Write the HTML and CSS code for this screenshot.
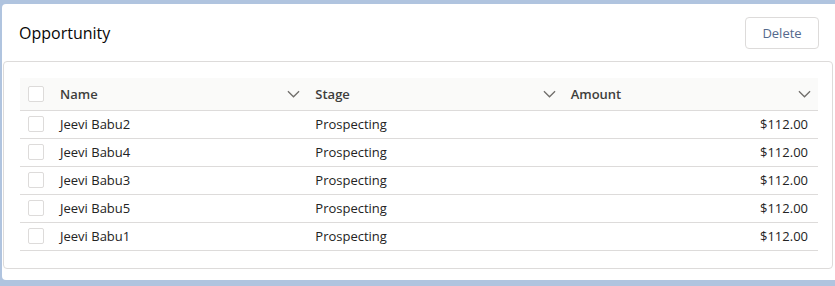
FILE: index.html
```html
<!DOCTYPE html>
<html lang="en">

<head>
    <meta charset="UTF-8">
    <meta name="viewport" content="width=device-width, initial-scale=1.0">
    <title>Opportunity</title>
    <link rel="stylesheet" href="styles.css">
</head>

<body>
    <div class="panel">
        <div class="panel-head">
            <h2 class="title">Opportunity</h2>
            <button class="btn">Delete</button>
        </div>
        <div class="card">
            <table class="grid">
                <thead>
                    <tr>
                        <th class="col-check"><span class="box"></span></th>
                        <th class="col">
                            <div class="th-inner"><span>Name</span><svg class="chev" viewBox="0 0 14 8"><path d="M1 1l6 6 6-6" /></svg></div>
                        </th>
                        <th class="col">
                            <div class="th-inner"><span>Stage</span><svg class="chev" viewBox="0 0 14 8"><path d="M1 1l6 6 6-6" /></svg></div>
                        </th>
                        <th class="col">
                            <div class="th-inner"><span>Amount</span><svg class="chev" viewBox="0 0 14 8"><path d="M1 1l6 6 6-6" /></svg></div>
                        </th>
                    </tr>
                </thead>
                <tbody>
                    <tr>
                        <td class="col-check"><span class="box"></span></td>
                        <td>Jeevi Babu2</td>
                        <td>Prospecting</td>
                        <td class="num">$112.00</td>
                    </tr>
                    <tr>
                        <td class="col-check"><span class="box"></span></td>
                        <td>Jeevi Babu4</td>
                        <td>Prospecting</td>
                        <td class="num">$112.00</td>
                    </tr>
                    <tr>
                        <td class="col-check"><span class="box"></span></td>
                        <td>Jeevi Babu3</td>
                        <td>Prospecting</td>
                        <td class="num">$112.00</td>
                    </tr>
                    <tr>
                        <td class="col-check"><span class="box"></span></td>
                        <td>Jeevi Babu5</td>
                        <td>Prospecting</td>
                        <td class="num">$112.00</td>
                    </tr>
                    <tr>
                        <td class="col-check"><span class="box"></span></td>
                        <td>Jeevi Babu1</td>
                        <td>Prospecting</td>
                        <td class="num">$112.00</td>
                    </tr>
                </tbody>
            </table>
        </div>
    </div>
</body>

</html>
```

FILE: styles.css
```css
* {
    margin: 0;
    padding: 0;
    box-sizing: border-box;
}

body {
    font-family: "Open Sans", Arial, sans-serif;
    background: #b0c4df;
    color: #080707;
    height: 286px;
    overflow: hidden;
}

.panel {
    margin: 4px 0 0 2px;
    background: #fff;
    border-radius: 4px 0 0 4px;
    padding: 0 2px 11px 1px;
}

.panel-head {
    display: flex;
    align-items: center;
    justify-content: space-between;
    height: 57px;
    padding: 0 14px 0 16px;
}

.title {
    font-size: 16px;
    font-weight: 400;
    color: #16325c;
    color: #080707;
}

.btn {
    font-family: inherit;
    font-size: 13px;
    color: #54698d;
    background: #fff;
    border: 1px solid #dddbda;
    border-radius: 4px;
    width: 74px;
    height: 32px;
}

.card {
    border: 1px solid #dddbda;
    border-radius: 4px;
    padding: 16px 14px 17px 16px;
}

.grid {
    width: 100%;
    border-collapse: collapse;
    table-layout: fixed;
    font-size: 13px;
}

.grid th {
    height: 32px;
    background: #fafaf9;
    border-bottom: 1px solid #dddbda;
    font-weight: 600;
    color: #3e3e3c;
    text-align: left;
}

.grid td {
    height: 28px;
    border-bottom: 1px solid #dddbda;
    color: #232323;
    padding-left: 8px;
}

.col-check {
    width: 32px;
}

.grid .col-check {
    padding-left: 8px;
}

.box {
    display: block;
    width: 16px;
    height: 16px;
    border: 1px solid #dddbda;
    border-radius: 2px;
    background: #fff;
}

.th-inner {
    display: flex;
    align-items: center;
    justify-content: space-between;
    padding: 0 7px 0 8px;
}

.chev {
    width: 13px;
    height: 8px;
    fill: none;
    stroke: #706e6b;
    stroke-width: 1.4;
}

.grid td.num {
    text-align: right;
    padding-right: 10px;
}
```
